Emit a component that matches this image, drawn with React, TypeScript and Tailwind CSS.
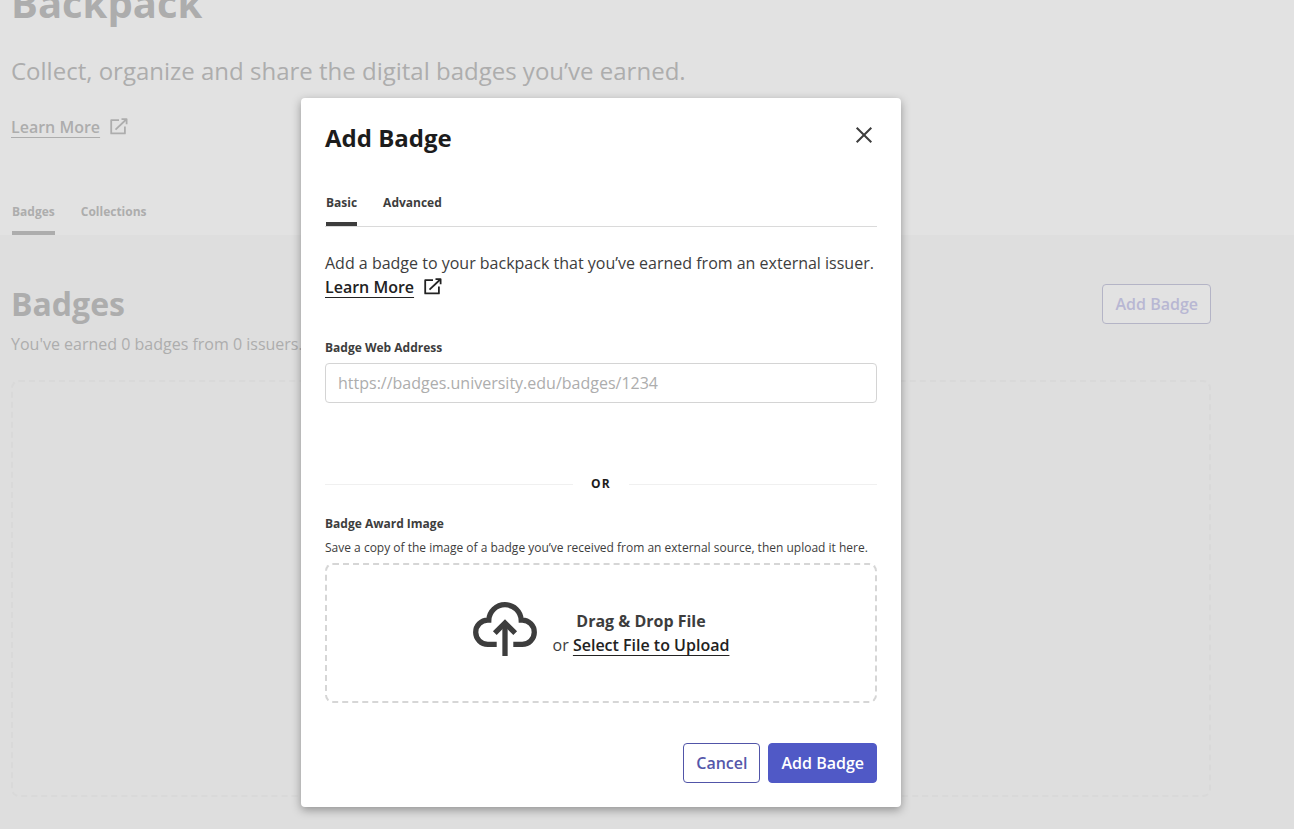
import React, { useState } from 'react';

const ExternalIcon: React.FC = () => (
  <svg width="18" height="18" viewBox="0 0 18 18" fill="none" stroke="currentColor" strokeWidth="1.8" strokeLinejoin="round" aria-hidden="true">
    <path d="M9 2.2H1.2V15.4H14.9V8.5" />
    <path d="M5.5 11.6L16.2 1.5" />
    <path d="M11.5 1.2H16.6V6.2" />
  </svg>
);

const CloudUploadIcon: React.FC = () => (
  <svg width="64" height="64" viewBox="0 0 64 64" fill="none" stroke="currentColor" strokeWidth="5.3" aria-hidden="true">
    <path d="M23.7 43.3H14.8A12.1 12.1 0 0 1 14.8 19.1H15.8A16.22 16.22 0 0 1 48.2 19.1H49.2A12.1 12.1 0 0 1 49.2 43.3H40.3" />
    <path d="M32 55V23" />
    <path d="M21.8 32.2L32 22L42.2 32.2" />
  </svg>
);

const LearnMore: React.FC<{ className: string }> = ({ className }) => (
  <div className={`flex items-center gap-[10px] text-base leading-6 font-semibold ${className}`}>
    <a href="#learn-more" className="underline decoration-1 underline-offset-4 [text-decoration-skip-ink:none]">
      Learn More
    </a>
    <ExternalIcon />
  </div>
);

const tabs = ['Basic', 'Advanced'];

const AddBadgeDialog: React.FC = () => {
  const [tab, setTab] = useState('Basic');
  const [url, setUrl] = useState('');

  return (
    <div
      role="dialog"
      aria-labelledby="dialog-title"
      className="w-full max-w-[600px] rounded bg-white p-6 text-[#3d3d3d] shadow-[0_3px_10px_rgba(0,0,0,0.35)]"
    >
      <div className="flex items-start justify-between">
        <h2 id="dialog-title" className="text-2xl leading-8 font-bold text-[#1c1c1c]">Add Badge</h2>
        <button type="button" aria-label="Close" className="flex h-[26px] w-[26px] items-center justify-center">
          <svg width="18" height="18" viewBox="0 0 18 18" fill="none" stroke="currentColor" strokeWidth="2">
            <path d="M1.7 1.7L16.3 16.3M16.3 1.7L1.7 16.3" />
          </svg>
        </button>
      </div>

      <div className="mt-10 flex gap-[26px] border-b border-[#dadada] pl-px">
        {tabs.map((name) => (
          <button
            key={name}
            type="button"
            onClick={() => setTab(name)}
            className={`border-b-4 pb-[10px] text-xs leading-[18px] font-bold ${tab === name ? 'border-[#3d3d3d]' : 'border-transparent'}`}
          >
            {name}
          </button>
        ))}
      </div>

      <p className="mt-6 text-base leading-6">Add a badge to your backpack that you’ve earned from an external issuer.</p>
      <LearnMore className="text-[#222222]" />

      <label htmlFor="badge-url" className="mt-10 block text-xs leading-[18px] font-bold">Badge Web Address</label>
      <input
        id="badge-url"
        type="url"
        value={url}
        onChange={(e) => setUrl(e.target.value)}
        placeholder="https://badges.university.edu/badges/1234"
        className="mt-[6px] h-10 w-full rounded border border-[#d4d4d4] px-3 text-base outline-none placeholder:text-[#adadad]"
      />

      <div className="mt-[72px] flex items-center gap-[18px]">
        <div className="h-px flex-1 bg-[#f0f0f0]" />
        <span className="text-xs leading-[18px] font-bold tracking-widest text-[#1c1c1c]">OR</span>
        <div className="h-px flex-1 bg-[#f0f0f0]" />
      </div>

      <label htmlFor="badge-file" className="mt-[22px] block text-xs leading-[18px] font-bold">Badge Award Image</label>
      <p className="mt-[6px] text-xs leading-[18px]">
        Save a copy of the image of a badge you’ve received from an external source, then upload it here.
      </p>
      <div className="mt-[6px] flex h-[140px] items-center justify-center gap-4 rounded-lg border-2 border-dashed border-[#d6d6d6]">
        <CloudUploadIcon />
        <div className="text-center text-base leading-6">
          <p className="font-bold">Drag &amp; Drop File</p>
          <p>
            or{' '}
            <label
              htmlFor="badge-file"
              className="cursor-pointer font-semibold text-[#222222] underline decoration-1 underline-offset-4 [text-decoration-skip-ink:none]"
            >
              Select File to Upload
            </label>
          </p>
          <input id="badge-file" type="file" className="sr-only" />
        </div>
      </div>

      <div className="mt-10 flex justify-end gap-2">
        <button type="button" className="h-10 rounded border border-[#5155a8] px-3 text-base font-semibold text-[#5557aa]">
          Cancel
        </button>
        <button type="button" className="h-10 rounded border border-[#5059c6] bg-[#5059c6] px-3 text-base font-semibold text-white">
          Add Badge
        </button>
      </div>
    </div>
  );
};

const App: React.FC = () => {
  return (
    <div className="relative min-h-screen overflow-hidden bg-[#dedede] font-['Open_Sans',sans-serif] text-[#adadad]">
      <header className="bg-[#e2e2e2]">
        <div className="-mt-[21px] max-w-[1211px] pl-[11px]">
          <h1 className="text-[40px] leading-[48px] font-bold">Backpack</h1>
          <p className="mt-7 text-2xl leading-8">Collect, organize and share the digital badges you’ve earned.</p>
          <LearnMore className="mt-7" />
          <nav className="mt-16 flex gap-[26px] pl-px text-xs leading-[18px] font-bold">
            <a href="#badges" className="border-b-4 border-[#adadad] pb-[10px]">Badges</a>
            <a href="#collections" className="border-b-4 border-transparent pb-[10px]">Collections</a>
          </nav>
        </div>
      </header>

      <main className="max-w-[1211px] pt-[49px] pb-8 pl-[11px]">
        <div className="flex items-center justify-between">
          <h2 className="text-[32px] leading-10 font-bold">Badges</h2>
          <button type="button" className="h-10 rounded border border-[#b4b4c6] bg-[#e2e2e2] px-3 text-base font-semibold text-[#b8b7d3]">
            Add Badge
          </button>
        </div>
        <p className="mt-2 text-base leading-6">You've earned 0 badges from 0 issuers.</p>
        <div className="mt-6 h-[417px] rounded-lg border-2 border-dashed border-[#d9d9d9]" />
      </main>

      {/* dialog layer over the dimmed page */}
      <div className="absolute inset-x-0 top-0 flex max-w-[1202px] justify-center pt-[98px]">
        <AddBadgeDialog />
      </div>
    </div>
  );
};

export default App;
